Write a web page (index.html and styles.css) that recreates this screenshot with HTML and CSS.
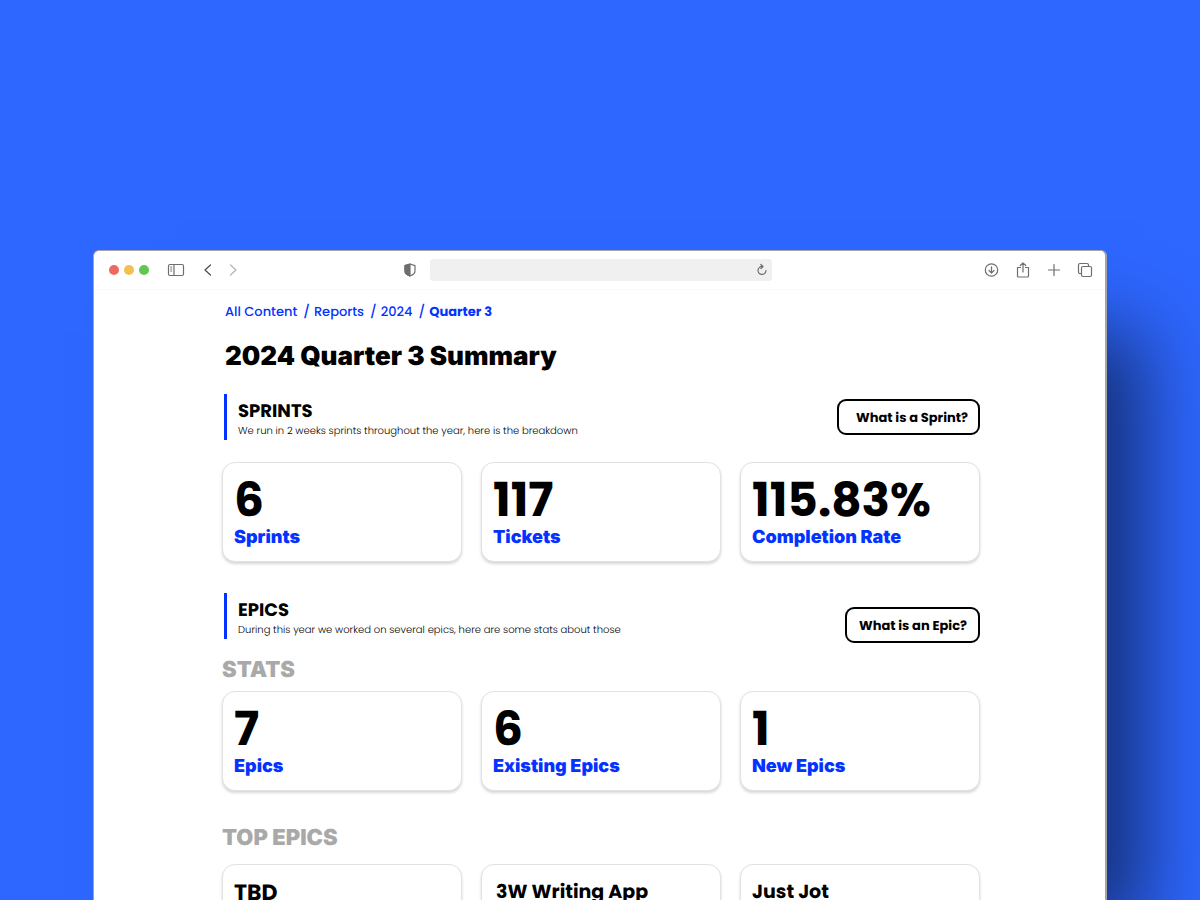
FILE: index.html
```
<!DOCTYPE html>
<html lang="en">
<head>
<meta charset="utf-8">
<meta name="viewport" content="width=device-width, initial-scale=1">
<title>2024 Quarter 3 Summary</title>
<link rel="stylesheet" href="styles.css">
</head>
<body>
<div class="window">
  <header class="toolbar">
    <div class="tools-left">
      <div class="lights"><span class="light red"></span><span class="light yellow"></span><span class="light green"></span></div>
      <button class="tool sidebar" aria-label="Sidebar"><svg width="18" height="18" viewBox="0 0 18 18"><rect x="1.5" y="3.5" width="15" height="11" rx="1.5"/><path d="M7 3.5v11M3.700 6h1M3.700 8h1M3.700 10h1"/></svg></button>
      <button class="tool back" aria-label="Back"><svg width="18" height="18" viewBox="0 0 18 18"><path d="M11.5 4 6 9l5.500 5"/></svg></button>
      <button class="tool forward" aria-label="Forward"><svg width="18" height="18" viewBox="0 0 18 18"><path d="M6.500 4 12 9l-5.500 5"/></svg></button>
      <button class="tool shield" aria-label="Privacy report"><svg width="18" height="18" viewBox="0 0 18 18"><path d="M9 3 14 4.600V10c0 2.500-2 3.900-5 5-3-1.100-5-2.500-5-5V4.600z"/><path class="solid" d="M9 3v12c-3-1.100-5-2.500-5-5V4.600z"/></svg></button>
    </div>
    <div class="address">
      <input class="address-input" type="text" aria-label="Address">
      <button class="tool reload" aria-label="Reload"><svg width="14" height="14" viewBox="0 0 14 14"><path d="M7.500 3.500a4 4 0 1 0 3.500 4M5.800 1.500l2.200 2L6 5.500"/></svg></button>
    </div>
    <div class="tools-right">
      <button class="tool" aria-label="Downloads"><svg width="18" height="18" viewBox="0 0 18 18"><circle cx="8.500" cy="9" r="6.200"/><path d="M8.500 5.800v6M6 9.500 8.500 12 11 9.500"/></svg></button>
      <button class="tool" aria-label="Share"><svg width="18" height="18" viewBox="0 0 18 18"><path d="M6.500 6.500h-3v8.500a1 1 0 0 0 1 1h9a1 1 0 0 0 1-1V6.500h-3M9 11V2M6.300 4.500 9 1.800l2.700 2.700"/></svg></button>
      <button class="tool" aria-label="New tab"><svg width="18" height="18" viewBox="0 0 18 18"><path d="M9 3.500v11M3.500 9h11"/></svg></button>
      <button class="tool" aria-label="Tab overview"><svg width="18" height="18" viewBox="0 0 18 18"><rect x="5.500" y="5.500" width="10" height="10" rx="1.500"/><path d="M5.500 12.500H4A1.500 1.500 0 0 1 2.500 11V4A1.500 1.500 0 0 1 4 2.500h7A1.500 1.500 0 0 1 12.500 4v1.500"/></svg></button>
    </div>
  </header>
  <main class="content">
    <nav class="crumbs" aria-label="Breadcrumb">
      <a href="#">All Content</a><span class="slash">/</span><a href="#">Reports</a><span class="slash">/</span><a href="#">2024</a><span class="slash">/</span><a class="current" href="#" aria-current="page">Quarter 3</a>
    </nav>
    <h1 class="title">2024 Quarter 3 Summary</h1>

    <section class="section">
      <div class="section-head">
        <div class="section-intro">
          <h2 class="section-name">SPRINTS</h2>
          <p class="section-note">We run in 2 weeks sprints throughout the year, here is the breakdown</p>
        </div>
        <button class="help help-wide">What is a Sprint?</button>
      </div>
      <div class="cards">
        <article class="card"><p class="number">6</p><h3 class="label">Sprints</h3></article>
        <article class="card"><p class="number">117</p><h3 class="label">Tickets</h3></article>
        <article class="card"><p class="number">115.83%</p><h3 class="label">Completion Rate</h3></article>
      </div>
    </section>

    <section class="section epics">
      <div class="section-head head-low">
        <div class="section-intro">
          <h2 class="section-name">EPICS</h2>
          <p class="section-note">During this year we worked on several epics, here are some stats about those</p>
        </div>
        <button class="help">What is an Epic?</button>
      </div>
      <h3 class="group">STATS</h3>
      <div class="cards cards-tight">
        <article class="card"><p class="number">7</p><h4 class="label">Epics</h4></article>
        <article class="card"><p class="number">6</p><h4 class="label">Existing Epics</h4></article>
        <article class="card"><p class="number">1</p><h4 class="label">New Epics</h4></article>
      </div>
      <h3 class="group group-top">TOP EPICS</h3>
      <div class="cards cards-top">
        <article class="card"><h4 class="epic epic-large">TBD</h4></article>
        <article class="card"><h4 class="epic epic-inset">3W Writing App</h4></article>
        <article class="card"><h4 class="epic">Just Jot</h4></article>
      </div>
    </section>
  </main>
</div>
</body>
</html>
```

FILE: styles.css
```
* { box-sizing: border-box; }
html { height: 100%; overflow: hidden; }
body {
  margin: 0;
  height: 100%;
  overflow: hidden;
  padding: 250px 93px 0;
  background: #2e67ff;
  color: #000;
  font-family: Poppins, Inter, "Liberation Sans", sans-serif;
  text-rendering: geometricPrecision;
}
h1, h2, h3, h4, p { margin: 0; }
button { font: inherit; color: inherit; cursor: pointer; text-rendering: inherit; }

.window {
  height: 100%;
  min-height: 650px;
  overflow: hidden;
  background: #fff;
  border: 1px solid #a5a5a5;
  border-width: 1px 2px 0 1px;
  border-radius: 6px 6px 0 0;
  box-shadow: 60px 58px 76px -24px rgba(0, 0, 0, 0.54);
}

.toolbar {
  display: grid;
  grid-template-columns: 1fr 34% 1fr;
  align-items: center;
  height: 38px;
  padding-left: 3px;
}
.tools-left, .tools-right { display: flex; align-items: center; }
.tools-left { padding: 0 11px 0 12px; }
.tools-right { justify-content: flex-end; gap: 13px; padding-right: 11px; }
.lights { display: flex; gap: 5px; }
.light { width: 10px; height: 10px; border-radius: 50%; }
.red { background: #ed6a5f; }
.yellow { background: #f5bf4f; }
.green { background: #61c554; }
.tool {
  display: flex;
  padding: 0;
  border: 0;
  background: none;
  color: #6e6e6e;
}
.tool svg { fill: none; stroke: currentColor; stroke-width: 1.2; stroke-linecap: round; stroke-linejoin: round; }
.tool .solid { fill: currentColor; }
.sidebar { margin-left: 18px; }
.back { margin-left: 14px; color: #4a4a4a; }
.forward { margin-left: 7px; color: #b5b5b5; }
.shield { margin-left: auto; }
.address {
  display: flex;
  align-items: center;
  height: 22px;
  padding-right: 3px;
  border-radius: 3px;
  background: #f0f0f0;
}
.address-input {
  flex: 1;
  min-width: 0;
  height: 22px;
  padding: 0 8px;
  border: 0;
  background: none;
  font: inherit;
  font-size: 12px;
}

.content {
  padding: 12px 125px 40px 128px;
  border-top: 1px solid #fafafa;
}
.crumbs {
  display: flex;
  padding-left: 3px;
  color: #0433ff;
  font-size: 13px;
  font-weight: 500;
  line-height: 20px;
}
.crumbs a { color: inherit; text-decoration: none; }
.crumbs .current { font-weight: 700; }
.slash { padding: 0 4px 0 6px; }
.title, .label, .group { font-family: Inter, sans-serif; font-weight: 900; }
.title {
  margin-top: 18px;
  padding-left: 3px;
  font-size: 26px;
  line-height: 34px;
}

.section { margin-top: 20px; }
.epics { margin-top: 31px; }
.section-head { display: flex; justify-content: space-between; align-items: center; }
.head-low { align-items: flex-start; }
.head-low .help { margin-top: 14px; }
.section-intro {
  margin-left: 2px;
  padding: 7px 0 1px 11px;
  border-left: 3px solid #0433ff;
}
.section-name { font-size: 18px; font-weight: 700; line-height: 22px; }
.section-note { font-size: 10px; font-weight: 300; line-height: 16px; }
.help {
  height: 36px;
  padding: 1px 11px 0 12px;
  border: 2px solid #000;
  border-radius: 9px;
  background: #fff;
  font-size: 13px;
  font-weight: 700;
  white-space: nowrap;
}
.help-wide { padding: 1px 10px 0 17px; }

.cards {
  display: grid;
  grid-template-columns: repeat(3, minmax(0, 1fr));
  gap: 19px;
  margin-top: 22px;
}
.cards-tight { margin-top: 7px; }
.cards-top { margin-top: 12px; }
.card {
  padding: 13px 11px 11px;
  border: 1px solid #e2e2e2;
  border-radius: 13px;
  background: #fff;
  box-shadow: 0 2px 3px rgba(0, 0, 0, 0.16);
}
.number { font-size: 47px; font-weight: 700; line-height: 50px; }
.label {
  color: #0433ff;
  font-size: 18px;
  line-height: 24px;
}
.group {
  margin-top: 13px;
  color: #a9a9a9;
  font-size: 22px;
  line-height: 28px;
}
.group-top { margin-top: 33px; }
.epic { font-size: 19px; font-weight: 700; line-height: 28px; }
.epic-large { font-size: 22px; line-height: 30px; }
.epic-inset { padding-left: 3px; }
```
